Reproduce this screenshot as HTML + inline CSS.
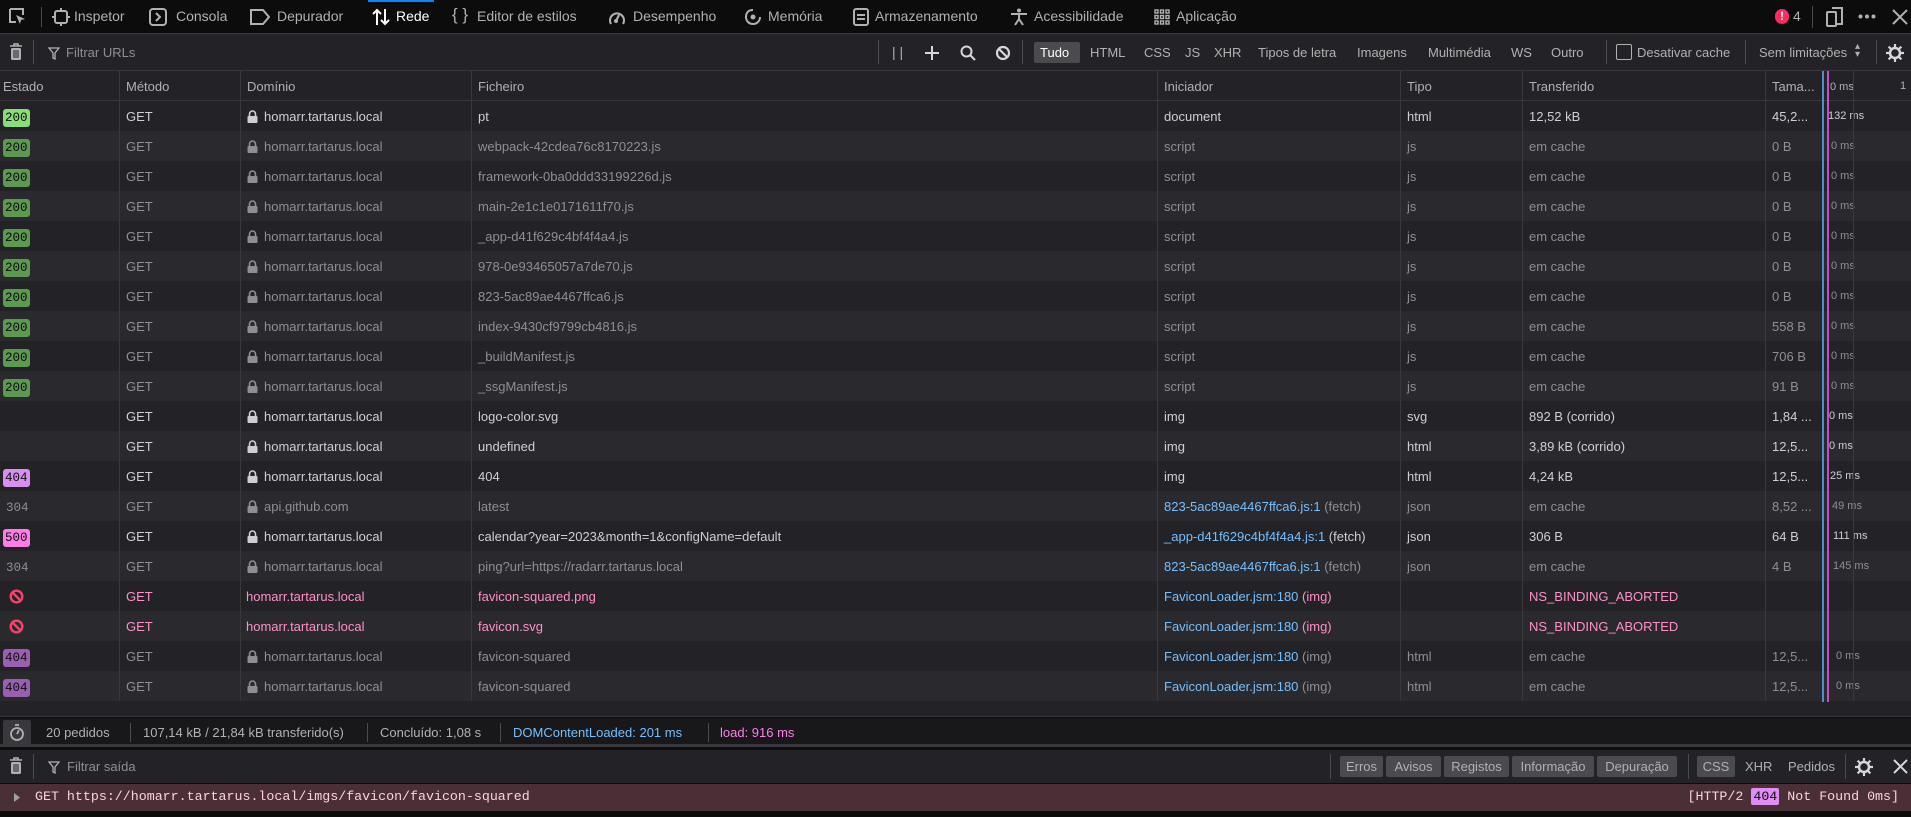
<!DOCTYPE html>
<html><head><meta charset="utf-8">
<style>
*{box-sizing:border-box;margin:0;padding:0}
body{width:1911px;height:817px;background:#0c0c0d;font-family:"Liberation Sans",sans-serif;color:#b1b1b3;overflow:hidden;position:relative;font-size:13px}
.abs{position:absolute;white-space:nowrap}
#top{position:absolute;left:0;top:0;width:1911px;height:34px;background:#0c0c0d;border-bottom:1px solid #38383d;font-size:14px;color:#b1b1b3}
#top .t{position:absolute;top:8px}
#fb{position:absolute;left:0;top:34px;width:1911px;height:37px;background:#232327;border-bottom:1px solid #38383d;font-size:13px}
#fb .t{position:absolute;top:11px;color:#b1b1b3}
.sep{position:absolute;width:1px;background:#4a4a4f}
#hdr{position:absolute;left:0;top:71px;width:1911px;height:30px;background:#232327;border-bottom:1px solid #38383d}
#hdr .c{line-height:32px}
.row{position:absolute;left:0;width:1911px;height:30px}
.c{position:absolute;top:0;height:30px;line-height:31px;white-space:nowrap;overflow:hidden;border-left:1px solid #38383d;padding-left:6px}
.c0{left:0;width:119px;border-left:none;padding-left:3px}
.c1{left:119px;width:121px}
.c2{left:240px;width:231px}
.c3{left:471px;width:686px}
.c4{left:1157px;width:243px}
.c5{left:1400px;width:122px}
.c6{left:1522px;width:243px}
.c7{left:1765px;width:57px}
.c8{left:1822px;width:89px;border-left:none;font-size:11px;padding-left:0}
.odd{background:#232327}.even{background:#2a2a2e}
.n{color:#cfcfd3}.d{color:#8f8f93}
.b{font-family:"Liberation Mono",monospace;font-size:12.5px;padding:2px 2px;border-radius:3px;color:#0c0c0d}
.g{background:#86de74}.gd{background:#5c9a50}
.p{background:#d98ff0}.pd{background:#9a5fb0}
.pk{background:#ff7de9}
.lk{display:inline-block;width:11px;height:13px;vertical-align:-2px;margin-right:6px}
.bl{color:#75bfff}
.blk{color:#ff8fc8}
.wf{position:absolute;top:0}
</style></head><body>

<div id="top">
 <svg class="abs" style="left:8px;top:7px" width="18" height="18" viewBox="0 0 18 18"><path d="M2 2h13v6M2 2v13h6" fill="none" stroke="#b1b1b3" stroke-width="2"/><path d="M8 8l9 4-4 1-1 4z" fill="#b1b1b3"/></svg>
 <div class="sep" style="left:41px;top:7px;height:20px"></div>
 <svg class="abs" style="left:52px;top:8px" width="18" height="18" viewBox="0 0 18 18"><rect x="3" y="3" width="12" height="12" rx="2" fill="none" stroke="#b1b1b3" stroke-width="2"/><path d="M9 0v3M9 15v3M0 9h3M15 9h3" stroke="#b1b1b3" stroke-width="2"/></svg>
 <span class="t" style="left:74px">Inspetor</span>
 <svg class="abs" style="left:149px;top:8px" width="18" height="18" viewBox="0 0 18 18"><rect x="1" y="1" width="16" height="16" rx="3" fill="none" stroke="#b1b1b3" stroke-width="2"/><path d="M7 5l4 4-4 4" fill="none" stroke="#b1b1b3" stroke-width="2"/></svg>
 <span class="t" style="left:176px">Consola</span>
 <svg class="abs" style="left:250px;top:9px" width="20" height="16" viewBox="0 0 20 16"><path d="M1 1h12l6 7-6 7H1z" fill="none" stroke="#b1b1b3" stroke-width="2"/></svg>
 <span class="t" style="left:277px">Depurador</span>
 <div class="abs" style="left:368px;top:0;width:66px;height:2px;background:#0a84ff"></div>
 <svg class="abs" style="left:372px;top:8px" width="18" height="18" viewBox="0 0 18 18"><path d="M5 17V2M1 6l4-4 4 4M13 1v15M9 12l4 4 4-4" fill="none" stroke="#fff" stroke-width="2"/></svg>
 <span class="t" style="left:396px;color:#fff">Rede</span>
 <span class="t" style="left:452px;top:5px;font-size:17px">{ }</span>
 <span class="t" style="left:477px">Editor de estilos</span>
 <svg class="abs" style="left:608px;top:8px" width="18" height="18" viewBox="0 0 18 18"><path d="M3 16A7 7 0 1 1 15 16" fill="none" stroke="#b1b1b3" stroke-width="2"/><circle cx="8" cy="13" r="2" fill="#b1b1b3"/><path d="M8 13l3-6" stroke="#b1b1b3" stroke-width="2"/></svg>
 <span class="t" style="left:633px">Desempenho</span>
 <svg class="abs" style="left:744px;top:8px" width="18" height="18" viewBox="0 0 18 18"><path d="M9 2c-5 0-7 3-7 7s3 7 7 7 7-3 7-7" fill="none" stroke="#b1b1b3" stroke-width="2"/><circle cx="9" cy="9" r="2.5" fill="#b1b1b3"/></svg>
 <span class="t" style="left:768px">Memória</span>
 <svg class="abs" style="left:853px;top:8px" width="16" height="18" viewBox="0 0 16 18"><rect x="1" y="1" width="14" height="16" rx="2" fill="none" stroke="#b1b1b3" stroke-width="2"/><path d="M4 7h8M4 11h8" stroke="#b1b1b3" stroke-width="2"/></svg>
 <span class="t" style="left:875px">Armazenamento</span>
 <svg class="abs" style="left:1010px;top:8px" width="18" height="18" viewBox="0 0 18 18"><circle cx="9" cy="2.5" r="2" fill="#b1b1b3"/><path d="M1 6h16M9 6v5M9 11l-4 6M9 11l4 6" stroke="#b1b1b3" stroke-width="2" fill="none"/></svg>
 <span class="t" style="left:1034px">Acessibilidade</span>
 <svg class="abs" style="left:1154px;top:9px" width="16" height="16" viewBox="0 0 16 16" fill="none" stroke="#b1b1b3" stroke-width="1.4"><rect x="1" y="1" width="3" height="3"/><rect x="6.5" y="1" width="3" height="3"/><rect x="12" y="1" width="3" height="3"/><rect x="1" y="6.5" width="3" height="3"/><rect x="6.5" y="6.5" width="3" height="3"/><rect x="12" y="6.5" width="3" height="3"/><rect x="1" y="12" width="3" height="3"/><rect x="6.5" y="12" width="3" height="3"/><rect x="12" y="12" width="3" height="3"/></svg>
 <span class="t" style="left:1176px">Aplicação</span>
 <div class="abs" style="left:1775px;top:9px;width:14px;height:15px;border-radius:7px;background:#ff2a5f;color:#fff;font-weight:bold;font-size:12px;text-align:center;line-height:15px">!</div>
 <span class="t" style="left:1793px">4</span>
 <div class="sep" style="left:1812px;top:6px;height:22px"></div>
 <svg class="abs" style="left:1826px;top:7px" width="18" height="20" viewBox="0 0 18 20"><rect x="1" y="5" width="9" height="14" rx="1" fill="none" stroke="#b1b1b3" stroke-width="2"/><path d="M6 1h10v16h-5" fill="none" stroke="#b1b1b3" stroke-width="2"/></svg>
 <svg class="abs" style="left:1858px;top:14px" width="18" height="5"><circle cx="2.5" cy="2.5" r="2" fill="#b1b1b3"/><circle cx="9" cy="2.5" r="2" fill="#b1b1b3"/><circle cx="15.5" cy="2.5" r="2" fill="#b1b1b3"/></svg>
 <svg class="abs" style="left:1892px;top:9px" width="16" height="16"><path d="M1 1l14 14M15 1L1 15" stroke="#b1b1b3" stroke-width="2"/></svg>
</div>

<div id="fb">
 <svg class="abs" style="left:9px;top:9px" width="14" height="18" viewBox="0 0 14 18"><path d="M1 3h12M5 3V1h4v2" stroke="#b1b1b3" stroke-width="1.6" fill="none"/><rect x="2" y="5" width="10" height="12" rx="1.5" fill="#b1b1b3"/><path d="M5 7v8M7 7v8M9 7v8" stroke="#232327" stroke-width="1"/></svg>
 <div class="sep" style="left:33px;top:6px;height:24px"></div>
 <svg class="abs" style="left:48px;top:13px" width="12" height="13" viewBox="0 0 12 13"><path d="M1 1h10L7 6v6L5 11V6z" fill="none" stroke="#b1b1b3" stroke-width="1.3"/></svg>
 <span class="t" style="left:66px;color:#8f8f93">Filtrar URLs</span>
 <div class="sep" style="left:878px;top:6px;height:24px"></div>
 <span class="t" style="left:892px;top:10px;font-size:14px">| |</span>
 <svg class="abs" style="left:925px;top:12px" width="14" height="14"><path d="M7 0v14M0 7h14" stroke="#d7d7db" stroke-width="2"/></svg>
 <svg class="abs" style="left:960px;top:11px" width="16" height="16"><circle cx="6.5" cy="6.5" r="5" fill="none" stroke="#d7d7db" stroke-width="2"/><path d="M10 10l5 5" stroke="#d7d7db" stroke-width="2"/></svg>
 <svg class="abs" style="left:995px;top:11px" width="16" height="16"><circle cx="8" cy="8" r="6" fill="none" stroke="#d7d7db" stroke-width="2.2"/><path d="M4 4l8 8" stroke="#d7d7db" stroke-width="2.2"/></svg>
 <div class="sep" style="left:1022px;top:6px;height:24px"></div>
 <div class="abs" style="left:1034px;top:8px;width:46px;height:21px;background:#4a4a4f;border-radius:2px"></div>
 <span class="t" style="left:1040px;color:#fff">Tudo</span>
 <span class="t" style="left:1090px">HTML</span>
 <span class="t" style="left:1144px">CSS</span>
 <span class="t" style="left:1185px">JS</span>
 <span class="t" style="left:1214px">XHR</span>
 <span class="t" style="left:1258px">Tipos de letra</span>
 <span class="t" style="left:1357px">Imagens</span>
 <span class="t" style="left:1428px">Multimédia</span>
 <span class="t" style="left:1511px">WS</span>
 <span class="t" style="left:1551px">Outro</span>
 <div class="sep" style="left:1606px;top:6px;height:24px"></div>
 <div class="abs" style="left:1616px;top:10px;width:16px;height:16px;border:1.5px solid #b1b1b3;border-radius:2px"></div>
 <span class="t" style="left:1637px">Desativar cache</span>
 <div class="sep" style="left:1745px;top:6px;height:24px"></div>
 <span class="t" style="left:1759px">Sem limitações</span>
 <span class="t" style="left:1855px;top:9px;font-size:10px;line-height:8px">▴<br>▾</span>
 <div class="sep" style="left:1876px;top:6px;height:24px"></div>
 <svg class="abs" style="left:1885px;top:9px" width="20" height="20" viewBox="0 0 20 20"><circle cx="10" cy="10" r="5" fill="none" stroke="#d7d7db" stroke-width="2.5"/><path d="M10 1v4M10 15v4M1 10h4M15 10h4M3.6 3.6l2.8 2.8M13.6 13.6l2.8 2.8M3.6 16.4l2.8-2.8M13.6 6.4l2.8-2.8" stroke="#d7d7db" stroke-width="2.2"/></svg>
</div>

<div id="hdr">
 <div class="c c0">Estado</div><div class="c c1">Método</div><div class="c c2">Domínio</div><div class="c c3">Ficheiro</div><div class="c c4">Iniciador</div><div class="c c5">Tipo</div><div class="c c6">Transferido</div><div class="c c7">Tama...</div><div class="c c8" style="padding-left:8px;font-size:11px">0 ms</div>
 <div class="abs" style="left:1853px;top:0;width:1px;height:30px;background:#38383d"></div>
 <span class="abs" style="left:1900px;top:9px;font-size:11px">1</span>
</div>

<div class="row odd n" style="top:101px"><div class="c c0"><span class="b g">200</span></div><div class="c c1">GET</div><div class="c c2"><svg class="lk" viewBox="0 0 11 13"><path d="M2.5 6V4a3 3 0 0 1 6 0v2" fill="none" stroke="currentColor" stroke-width="1.6"/><rect x="0.5" y="6" width="10" height="7" rx="1" fill="currentColor"/></svg>homarr.tartarus.local</div><div class="c c3">pt</div><div class="c c4">document</div><div class="c c5">html</div><div class="c c6">12,52 kB</div><div class="c c7">45,2...</div><div class="c c8"><span class="wf" style="left:6px">132 ms</span></div></div>
<div class="row even d" style="top:131px"><div class="c c0"><span class="b gd">200</span></div><div class="c c1">GET</div><div class="c c2"><svg class="lk" viewBox="0 0 11 13"><path d="M2.5 6V4a3 3 0 0 1 6 0v2" fill="none" stroke="currentColor" stroke-width="1.6"/><rect x="0.5" y="6" width="10" height="7" rx="1" fill="currentColor"/></svg>homarr.tartarus.local</div><div class="c c3">webpack-42cdea76c8170223.js</div><div class="c c4">script</div><div class="c c5">js</div><div class="c c6">em cache</div><div class="c c7">0 B</div><div class="c c8"><span class="wf" style="left:9px">0 ms</span></div></div>
<div class="row odd d" style="top:161px"><div class="c c0"><span class="b gd">200</span></div><div class="c c1">GET</div><div class="c c2"><svg class="lk" viewBox="0 0 11 13"><path d="M2.5 6V4a3 3 0 0 1 6 0v2" fill="none" stroke="currentColor" stroke-width="1.6"/><rect x="0.5" y="6" width="10" height="7" rx="1" fill="currentColor"/></svg>homarr.tartarus.local</div><div class="c c3">framework-0ba0ddd33199226d.js</div><div class="c c4">script</div><div class="c c5">js</div><div class="c c6">em cache</div><div class="c c7">0 B</div><div class="c c8"><span class="wf" style="left:9px">0 ms</span></div></div>
<div class="row even d" style="top:191px"><div class="c c0"><span class="b gd">200</span></div><div class="c c1">GET</div><div class="c c2"><svg class="lk" viewBox="0 0 11 13"><path d="M2.5 6V4a3 3 0 0 1 6 0v2" fill="none" stroke="currentColor" stroke-width="1.6"/><rect x="0.5" y="6" width="10" height="7" rx="1" fill="currentColor"/></svg>homarr.tartarus.local</div><div class="c c3">main-2e1c1e0171611f70.js</div><div class="c c4">script</div><div class="c c5">js</div><div class="c c6">em cache</div><div class="c c7">0 B</div><div class="c c8"><span class="wf" style="left:9px">0 ms</span></div></div>
<div class="row odd d" style="top:221px"><div class="c c0"><span class="b gd">200</span></div><div class="c c1">GET</div><div class="c c2"><svg class="lk" viewBox="0 0 11 13"><path d="M2.5 6V4a3 3 0 0 1 6 0v2" fill="none" stroke="currentColor" stroke-width="1.6"/><rect x="0.5" y="6" width="10" height="7" rx="1" fill="currentColor"/></svg>homarr.tartarus.local</div><div class="c c3">_app-d41f629c4bf4f4a4.js</div><div class="c c4">script</div><div class="c c5">js</div><div class="c c6">em cache</div><div class="c c7">0 B</div><div class="c c8"><span class="wf" style="left:9px">0 ms</span></div></div>
<div class="row even d" style="top:251px"><div class="c c0"><span class="b gd">200</span></div><div class="c c1">GET</div><div class="c c2"><svg class="lk" viewBox="0 0 11 13"><path d="M2.5 6V4a3 3 0 0 1 6 0v2" fill="none" stroke="currentColor" stroke-width="1.6"/><rect x="0.5" y="6" width="10" height="7" rx="1" fill="currentColor"/></svg>homarr.tartarus.local</div><div class="c c3">978-0e93465057a7de70.js</div><div class="c c4">script</div><div class="c c5">js</div><div class="c c6">em cache</div><div class="c c7">0 B</div><div class="c c8"><span class="wf" style="left:9px">0 ms</span></div></div>
<div class="row odd d" style="top:281px"><div class="c c0"><span class="b gd">200</span></div><div class="c c1">GET</div><div class="c c2"><svg class="lk" viewBox="0 0 11 13"><path d="M2.5 6V4a3 3 0 0 1 6 0v2" fill="none" stroke="currentColor" stroke-width="1.6"/><rect x="0.5" y="6" width="10" height="7" rx="1" fill="currentColor"/></svg>homarr.tartarus.local</div><div class="c c3">823-5ac89ae4467ffca6.js</div><div class="c c4">script</div><div class="c c5">js</div><div class="c c6">em cache</div><div class="c c7">0 B</div><div class="c c8"><span class="wf" style="left:9px">0 ms</span></div></div>
<div class="row even d" style="top:311px"><div class="c c0"><span class="b gd">200</span></div><div class="c c1">GET</div><div class="c c2"><svg class="lk" viewBox="0 0 11 13"><path d="M2.5 6V4a3 3 0 0 1 6 0v2" fill="none" stroke="currentColor" stroke-width="1.6"/><rect x="0.5" y="6" width="10" height="7" rx="1" fill="currentColor"/></svg>homarr.tartarus.local</div><div class="c c3">index-9430cf9799cb4816.js</div><div class="c c4">script</div><div class="c c5">js</div><div class="c c6">em cache</div><div class="c c7">558 B</div><div class="c c8"><span class="wf" style="left:9px">0 ms</span></div></div>
<div class="row odd d" style="top:341px"><div class="c c0"><span class="b gd">200</span></div><div class="c c1">GET</div><div class="c c2"><svg class="lk" viewBox="0 0 11 13"><path d="M2.5 6V4a3 3 0 0 1 6 0v2" fill="none" stroke="currentColor" stroke-width="1.6"/><rect x="0.5" y="6" width="10" height="7" rx="1" fill="currentColor"/></svg>homarr.tartarus.local</div><div class="c c3">_buildManifest.js</div><div class="c c4">script</div><div class="c c5">js</div><div class="c c6">em cache</div><div class="c c7">706 B</div><div class="c c8"><span class="wf" style="left:9px">0 ms</span></div></div>
<div class="row even d" style="top:371px"><div class="c c0"><span class="b gd">200</span></div><div class="c c1">GET</div><div class="c c2"><svg class="lk" viewBox="0 0 11 13"><path d="M2.5 6V4a3 3 0 0 1 6 0v2" fill="none" stroke="currentColor" stroke-width="1.6"/><rect x="0.5" y="6" width="10" height="7" rx="1" fill="currentColor"/></svg>homarr.tartarus.local</div><div class="c c3">_ssgManifest.js</div><div class="c c4">script</div><div class="c c5">js</div><div class="c c6">em cache</div><div class="c c7">91 B</div><div class="c c8"><span class="wf" style="left:9px">0 ms</span></div></div>
<div class="row odd n" style="top:401px"><div class="c c0"></div><div class="c c1">GET</div><div class="c c2"><svg class="lk" viewBox="0 0 11 13"><path d="M2.5 6V4a3 3 0 0 1 6 0v2" fill="none" stroke="currentColor" stroke-width="1.6"/><rect x="0.5" y="6" width="10" height="7" rx="1" fill="currentColor"/></svg>homarr.tartarus.local</div><div class="c c3">logo-color.svg</div><div class="c c4">img</div><div class="c c5">svg</div><div class="c c6">892 B (corrido)</div><div class="c c7">1,84 ...</div><div class="c c8"><span class="wf" style="left:7px">0 ms</span></div></div>
<div class="row even n" style="top:431px"><div class="c c0"></div><div class="c c1">GET</div><div class="c c2"><svg class="lk" viewBox="0 0 11 13"><path d="M2.5 6V4a3 3 0 0 1 6 0v2" fill="none" stroke="currentColor" stroke-width="1.6"/><rect x="0.5" y="6" width="10" height="7" rx="1" fill="currentColor"/></svg>homarr.tartarus.local</div><div class="c c3">undefined</div><div class="c c4">img</div><div class="c c5">html</div><div class="c c6">3,89 kB (corrido)</div><div class="c c7">12,5...</div><div class="c c8"><span class="wf" style="left:7px">0 ms</span></div></div>
<div class="row odd n" style="top:461px"><div class="c c0"><span class="b p">404</span></div><div class="c c1">GET</div><div class="c c2"><svg class="lk" viewBox="0 0 11 13"><path d="M2.5 6V4a3 3 0 0 1 6 0v2" fill="none" stroke="currentColor" stroke-width="1.6"/><rect x="0.5" y="6" width="10" height="7" rx="1" fill="currentColor"/></svg>homarr.tartarus.local</div><div class="c c3">404</div><div class="c c4">img</div><div class="c c5">html</div><div class="c c6">4,24 kB</div><div class="c c7">12,5...</div><div class="c c8"><span class="wf" style="left:8px">25 ms</span></div></div>
<div class="row even d" style="top:491px"><div class="c c0"><span style="font-family:'Liberation Mono',monospace;font-size:12.5px;padding-left:3px">304</span></div><div class="c c1">GET</div><div class="c c2"><svg class="lk" viewBox="0 0 11 13"><path d="M2.5 6V4a3 3 0 0 1 6 0v2" fill="none" stroke="currentColor" stroke-width="1.6"/><rect x="0.5" y="6" width="10" height="7" rx="1" fill="currentColor"/></svg>api.github.com</div><div class="c c3">latest</div><div class="c c4"><span class="bl">823-5ac89ae4467ffca6.js:1</span> (fetch)</div><div class="c c5">json</div><div class="c c6">em cache</div><div class="c c7">8,52 ...</div><div class="c c8"><span class="wf" style="left:10px">49 ms</span></div></div>
<div class="row odd n" style="top:521px"><div class="c c0"><span class="b pk">500</span></div><div class="c c1">GET</div><div class="c c2"><svg class="lk" viewBox="0 0 11 13"><path d="M2.5 6V4a3 3 0 0 1 6 0v2" fill="none" stroke="currentColor" stroke-width="1.6"/><rect x="0.5" y="6" width="10" height="7" rx="1" fill="currentColor"/></svg>homarr.tartarus.local</div><div class="c c3">calendar?year=2023&amp;month=1&amp;configName=default</div><div class="c c4"><span class="bl">_app-d41f629c4bf4f4a4.js:1</span> (fetch)</div><div class="c c5">json</div><div class="c c6">306 B</div><div class="c c7">64 B</div><div class="c c8"><span class="wf" style="left:11px">111 ms</span></div></div>
<div class="row even d" style="top:551px"><div class="c c0"><span style="font-family:'Liberation Mono',monospace;font-size:12.5px;padding-left:3px">304</span></div><div class="c c1">GET</div><div class="c c2"><svg class="lk" viewBox="0 0 11 13"><path d="M2.5 6V4a3 3 0 0 1 6 0v2" fill="none" stroke="currentColor" stroke-width="1.6"/><rect x="0.5" y="6" width="10" height="7" rx="1" fill="currentColor"/></svg>homarr.tartarus.local</div><div class="c c3">ping?url=https://radarr.tartarus.local</div><div class="c c4"><span class="bl">823-5ac89ae4467ffca6.js:1</span> (fetch)</div><div class="c c5">json</div><div class="c c6">em cache</div><div class="c c7">4 B</div><div class="c c8"><span class="wf" style="left:11px">145 ms</span></div></div>
<div class="row odd blk" style="top:581px"><div class="c c0"><svg style="margin:8px 0 0 6px" width="15" height="15"><circle cx="7.5" cy="7.5" r="5.8" fill="none" stroke="#ff3d6b" stroke-width="2.4"/><path d="M3.5 3.5l8 8" stroke="#ff3d6b" stroke-width="2.4"/></svg></div><div class="c c1">GET</div><div class="c c2" style="padding-left:5px">homarr.tartarus.local</div><div class="c c3">favicon-squared.png</div><div class="c c4"><span class="bl">FaviconLoader.jsm:180</span> (img)</div><div class="c c5"></div><div class="c c6">NS_BINDING_ABORTED</div><div class="c c7"></div><div class="c c8"></div></div>
<div class="row even blk" style="top:611px"><div class="c c0"><svg style="margin:8px 0 0 6px" width="15" height="15"><circle cx="7.5" cy="7.5" r="5.8" fill="none" stroke="#ff3d6b" stroke-width="2.4"/><path d="M3.5 3.5l8 8" stroke="#ff3d6b" stroke-width="2.4"/></svg></div><div class="c c1">GET</div><div class="c c2" style="padding-left:5px">homarr.tartarus.local</div><div class="c c3">favicon.svg</div><div class="c c4"><span class="bl">FaviconLoader.jsm:180</span> (img)</div><div class="c c5"></div><div class="c c6">NS_BINDING_ABORTED</div><div class="c c7"></div><div class="c c8"></div></div>
<div class="row odd d" style="top:641px"><div class="c c0"><span class="b pd">404</span></div><div class="c c1">GET</div><div class="c c2"><svg class="lk" viewBox="0 0 11 13"><path d="M2.5 6V4a3 3 0 0 1 6 0v2" fill="none" stroke="currentColor" stroke-width="1.6"/><rect x="0.5" y="6" width="10" height="7" rx="1" fill="currentColor"/></svg>homarr.tartarus.local</div><div class="c c3">favicon-squared</div><div class="c c4"><span class="bl">FaviconLoader.jsm:180</span> (img)</div><div class="c c5">html</div><div class="c c6">em cache</div><div class="c c7">12,5...</div><div class="c c8"><span class="wf" style="left:14px">0 ms</span></div></div>
<div class="row even d" style="top:671px"><div class="c c0"><span class="b pd">404</span></div><div class="c c1">GET</div><div class="c c2"><svg class="lk" viewBox="0 0 11 13"><path d="M2.5 6V4a3 3 0 0 1 6 0v2" fill="none" stroke="currentColor" stroke-width="1.6"/><rect x="0.5" y="6" width="10" height="7" rx="1" fill="currentColor"/></svg>homarr.tartarus.local</div><div class="c c3">favicon-squared</div><div class="c c4"><span class="bl">FaviconLoader.jsm:180</span> (img)</div><div class="c c5">html</div><div class="c c6">em cache</div><div class="c c7">12,5...</div><div class="c c8"><span class="wf" style="left:14px">0 ms</span></div></div>

<div class="abs" style="left:0;top:701px;width:1911px;height:16px;background:#232327;border-bottom:1px solid #38383d"></div>
<div class="abs" style="left:1853px;top:101px;width:1px;height:600px;background:#38383d"></div>
<div class="abs" style="left:1822px;top:71px;width:2px;height:631px;background:#4f8fcf"></div>
<div class="abs" style="left:1827px;top:71px;width:2px;height:631px;background:#c050c0"></div>

<div class="abs" style="left:0;top:718px;width:1911px;height:29px;background:#18181a;border-bottom:3px solid #38383d;font-size:13px">
 <div class="abs" style="left:3px;top:2px;width:28px;height:25px;background:#38383d;border-radius:2px"></div>
 <svg class="abs" style="left:9px;top:5px" width="16" height="19"><circle cx="8" cy="11" r="6" fill="none" stroke="#b1b1b3" stroke-width="1.8"/><path d="M8 11l2-4M6 2h4" stroke="#b1b1b3" stroke-width="1.8"/></svg>
 <span class="abs" style="left:46px;top:7px">20 pedidos</span>
 <div class="sep" style="left:130px;top:5px;height:19px"></div>
 <span class="abs" style="left:143px;top:7px">107,14 kB / 21,84 kB transferido(s)</span>
 <div class="sep" style="left:367px;top:5px;height:19px"></div>
 <span class="abs" style="left:380px;top:7px">Concluído: 1,08 s</span>
 <div class="sep" style="left:500px;top:5px;height:19px"></div>
 <span class="abs" style="left:513px;top:7px;color:#75bfff">DOMContentLoaded: 201 ms</span>
 <div class="sep" style="left:708px;top:5px;height:19px"></div>
 <span class="abs" style="left:720px;top:7px;color:#ff7de9">load: 916 ms</span>
</div>

<div class="abs" style="left:0;top:750px;width:1911px;height:33px;background:#232327;font-size:13px">
 <svg class="abs" style="left:9px;top:7px" width="14" height="18" viewBox="0 0 14 18"><path d="M1 3h12M5 3V1h4v2" stroke="#b1b1b3" stroke-width="1.6" fill="none"/><rect x="2" y="5" width="10" height="12" rx="1.5" fill="#b1b1b3"/><path d="M5 7v8M7 7v8M9 7v8" stroke="#232327" stroke-width="1"/></svg>
 <div class="sep" style="left:33px;top:4px;height:25px"></div>
 <svg class="abs" style="left:48px;top:11px" width="12" height="13" viewBox="0 0 12 13"><path d="M1 1h10L7 6v6L5 11V6z" fill="none" stroke="#b1b1b3" stroke-width="1.3"/></svg>
 <span class="abs" style="left:67px;top:9px;color:#8f8f93">Filtrar saída</span>
 <div class="sep" style="left:1330px;top:4px;height:25px"></div>
 <div class="abs" style="left:1340px;top:6px;width:43px;height:21px;background:#4a4a4f;border-radius:2px;text-align:center;line-height:21px">Erros</div>
 <div class="abs" style="left:1386px;top:6px;width:55px;height:21px;background:#4a4a4f;border-radius:2px;text-align:center;line-height:21px">Avisos</div>
 <div class="abs" style="left:1444px;top:6px;width:65px;height:21px;background:#4a4a4f;border-radius:2px;text-align:center;line-height:21px">Registos</div>
 <div class="abs" style="left:1512px;top:6px;width:82px;height:21px;background:#4a4a4f;border-radius:2px;text-align:center;line-height:21px">Informação</div>
 <div class="abs" style="left:1597px;top:6px;width:80px;height:21px;background:#4a4a4f;border-radius:2px;text-align:center;line-height:21px">Depuração</div>
 <div class="sep" style="left:1688px;top:4px;height:25px"></div>
 <div class="abs" style="left:1697px;top:6px;width:38px;height:21px;background:#4a4a4f;border-radius:2px;text-align:center;line-height:21px">CSS</div>
 <span class="abs" style="left:1745px;top:9px">XHR</span>
 <span class="abs" style="left:1788px;top:9px">Pedidos</span>
 <div class="sep" style="left:1845px;top:4px;height:25px"></div>
 <svg class="abs" style="left:1854px;top:7px" width="20" height="20" viewBox="0 0 20 20"><circle cx="10" cy="10" r="5" fill="none" stroke="#d7d7db" stroke-width="2.5"/><path d="M10 1v4M10 15v4M1 10h4M15 10h4M3.6 3.6l2.8 2.8M13.6 13.6l2.8 2.8M3.6 16.4l2.8-2.8M13.6 6.4l2.8-2.8" stroke="#d7d7db" stroke-width="2.2"/></svg>
 <svg class="abs" style="left:1893px;top:9px" width="15" height="15"><path d="M1 1l13 13M14 1L1 14" stroke="#d7d7db" stroke-width="2"/></svg>
</div>

<div class="abs" style="left:0;top:784px;width:1911px;height:27px;background:#4b2f36;font-family:'Liberation Mono',monospace;font-size:13.3px;color:#ffd0db">
 <svg class="abs" style="left:13px;top:8px" width="8" height="11"><path d="M1 1l6 4.5L1 10z" fill="#a0a0a3"/></svg>
 <span class="abs" style="left:35px;top:5px">GET https://homarr.tartarus.local/imgs/favicon/favicon-squared</span>
 <span class="abs" style="right:12px;top:5px">[HTTP/2 <span style="background:#e08cf5;color:#0c0c0d;padding:1px 2px;border-radius:2px">404</span> Not Found 0ms]</span>
</div>
</body></html>
